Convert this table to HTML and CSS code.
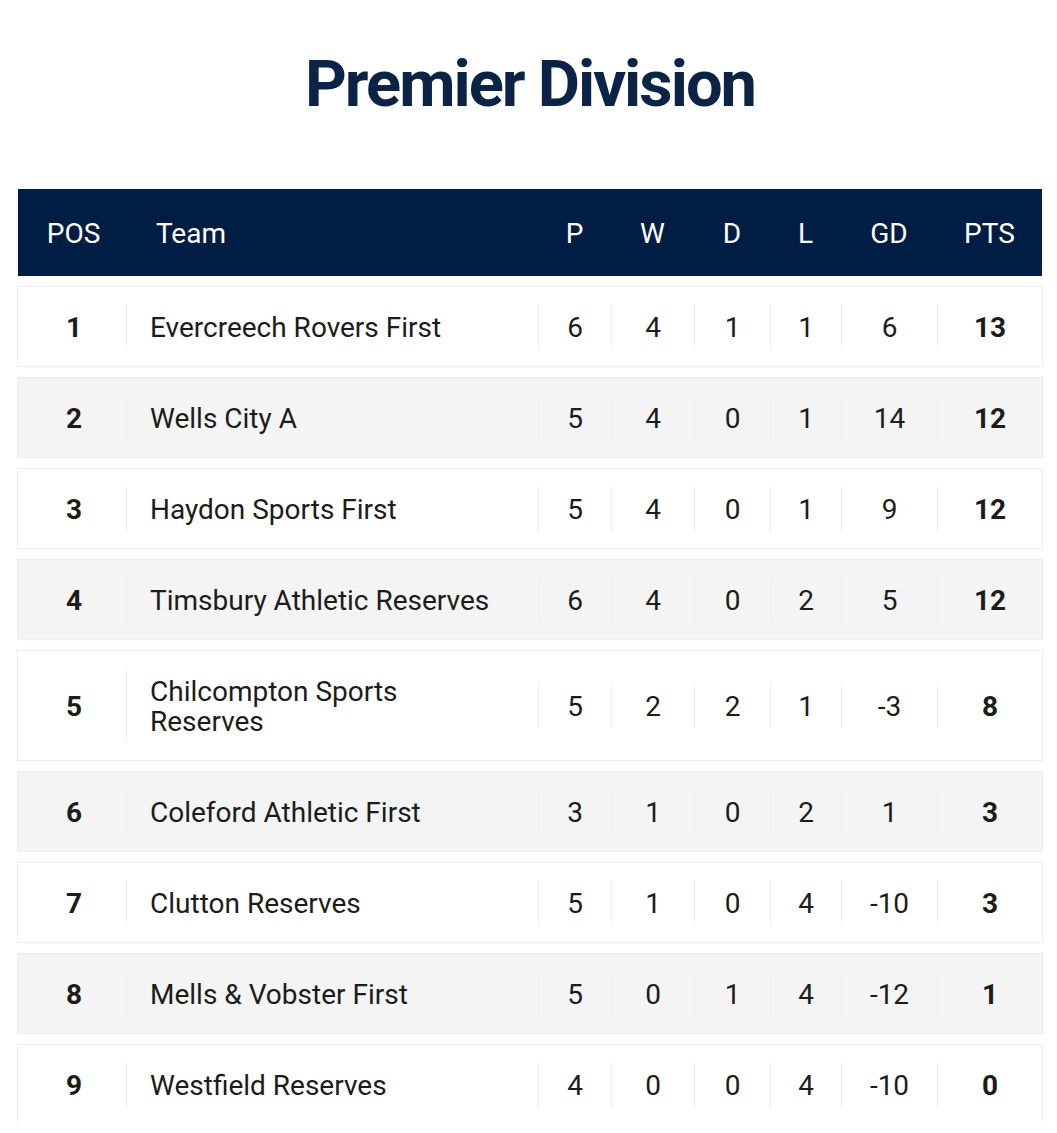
FILE: index.html
```html
<!DOCTYPE html>
<html lang="en">
<head>
<meta charset="utf-8">
<title>Premier Division</title>
<link rel="stylesheet" href="styles.css">
</head>
<body>
<main class="page">
  <h1 class="title">Premier Division</h1>
  <div class="table">
    <div class="head">
      <div class="hc pos">POS</div>
      <div class="hc team">Team</div>
      <div class="hc">P</div>
      <div class="hc">W</div>
      <div class="hc">D</div>
      <div class="hc">L</div>
      <div class="hc">GD</div>
      <div class="hc">PTS</div>
    </div>
    <div class="row">
      <div class="c pos">1</div><div class="c team">Evercreech Rovers First</div>
      <div class="c">6</div><div class="c">4</div><div class="c">1</div><div class="c">1</div><div class="c">6</div><div class="c pts">13</div>
    </div>
    <div class="row alt">
      <div class="c pos">2</div><div class="c team">Wells City A</div>
      <div class="c">5</div><div class="c">4</div><div class="c">0</div><div class="c">1</div><div class="c">14</div><div class="c pts">12</div>
    </div>
    <div class="row">
      <div class="c pos">3</div><div class="c team">Haydon Sports First</div>
      <div class="c">5</div><div class="c">4</div><div class="c">0</div><div class="c">1</div><div class="c">9</div><div class="c pts">12</div>
    </div>
    <div class="row alt">
      <div class="c pos">4</div><div class="c team">Timsbury Athletic Reserves</div>
      <div class="c">6</div><div class="c">4</div><div class="c">0</div><div class="c">2</div><div class="c">5</div><div class="c pts">12</div>
    </div>
    <div class="row">
      <div class="c pos">5</div><div class="c team">Chilcompton Sports<br>Reserves</div>
      <div class="c">5</div><div class="c">2</div><div class="c">2</div><div class="c">1</div><div class="c">-3</div><div class="c pts">8</div>
    </div>
    <div class="row alt">
      <div class="c pos">6</div><div class="c team">Coleford Athletic First</div>
      <div class="c">3</div><div class="c">1</div><div class="c">0</div><div class="c">2</div><div class="c">1</div><div class="c pts">3</div>
    </div>
    <div class="row">
      <div class="c pos">7</div><div class="c team">Clutton Reserves</div>
      <div class="c">5</div><div class="c">1</div><div class="c">0</div><div class="c">4</div><div class="c">-10</div><div class="c pts">3</div>
    </div>
    <div class="row alt">
      <div class="c pos">8</div><div class="c team">Mells &amp; Vobster First</div>
      <div class="c">5</div><div class="c">0</div><div class="c">1</div><div class="c">4</div><div class="c">-12</div><div class="c pts">1</div>
    </div>
    <div class="row">
      <div class="c pos">9</div><div class="c team">Westfield Reserves</div>
      <div class="c">4</div><div class="c">0</div><div class="c">0</div><div class="c">4</div><div class="c">-10</div><div class="c pts">0</div>
    </div>
  </div>
</main>
</body>
</html>
```
FILE: styles.css
```css
html, body {
  margin: 0;
  padding: 0;
  background: #ffffff;
}

body {
  font-family: Roboto, "Liberation Sans", sans-serif;
  color: #1c1c1c;
}

.page {
  width: 1024px;
  margin-left: 18px;
  padding-top: 46px;
}

.title {
  margin: 0 0 67px 0;
  text-align: center;
  font-size: 65px;
  line-height: 76px;
  font-weight: 700;
  letter-spacing: -2px;
  color: #0a2346;
}

.table {
  display: flex;
  flex-direction: column;
  gap: 12px;
}

.head,
.row {
  display: grid;
  grid-template-columns: 108px 412px 73px 83px 76px 71px 96px 105px;
  align-items: center;
}

.head {
  height: 87px;
  background: #001e44;
  color: #ffffff;
  margin-bottom: -1px;
}

.hc {
  font-size: 28px;
  line-height: 30px;
  padding-top: 3px;
  text-align: center;
}

.hc.pos {
  padding-left: 3px;
}

.hc.team {
  text-align: left;
  padding-left: 30px;
}

.row {
  background: #ffffff;
  padding: 17px 0;
  box-shadow: 0 0 0 1px #ededed, 0 0 3px rgba(0, 0, 0, 0.05);
}

.row.alt {
  background: #f4f4f4;
}

.c {
  font-size: 28px;
  line-height: 30px;
  padding: 9px 0 6px;
  text-align: center;
  border-left: 1px solid #ededed;
}

.c.pos {
  border-left: none;
  font-weight: 700;
  padding-left: 4px;
}

.c.team {
  text-align: left;
  padding-left: 23px;
}

.c.pts {
  font-weight: 700;
}
```
